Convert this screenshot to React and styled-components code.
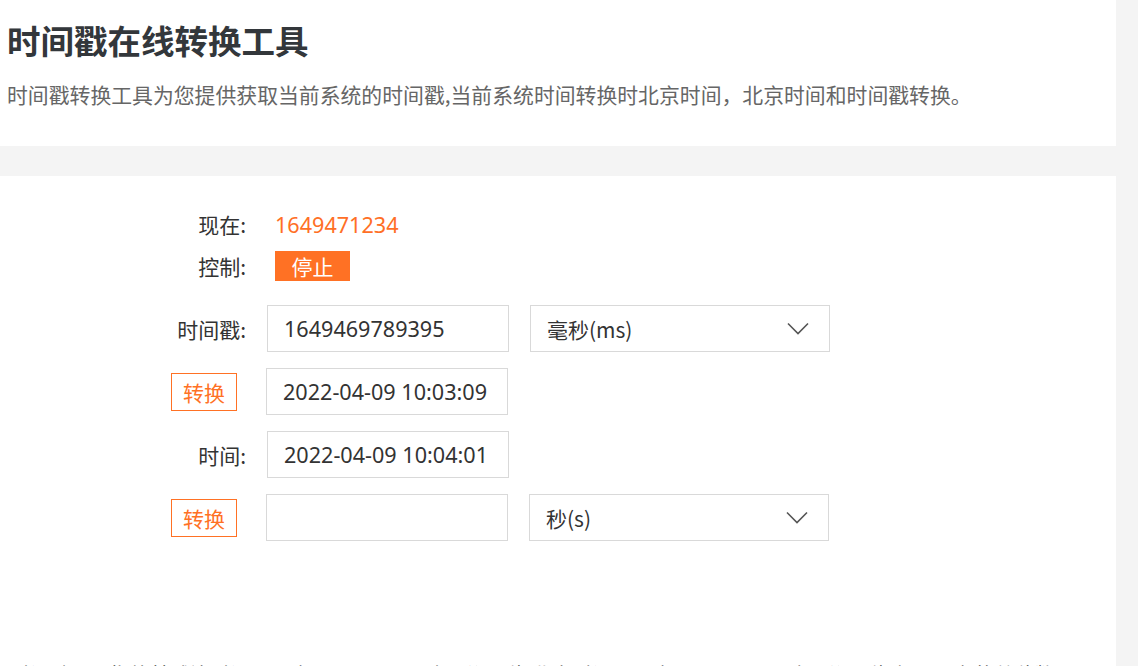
import React from "react";
import styled, { createGlobalStyle } from "styled-components";

const Global = createGlobalStyle`
  html, body { margin: 0; padding: 0; background: #f4f4f4; }
  body { font-family: "Noto Sans CJK SC", "Noto Sans", sans-serif; color: #333; overflow: hidden; }
  * { box-sizing: border-box; }
`;

const Page = styled.div`
  width: 1116px;
  display: flex;
  flex-direction: column;
  gap: 30px;
`;

const Header = styled.header`
  background: #fff;
  padding: 18px 7px 37px;
`;

const Title = styled.h1`
  margin: 0;
  font-size: 33.5px;
  line-height: 44px;
  font-weight: 700;
  color: #33373b;
`;

const Subtitle = styled.p`
  margin: 17px 0 0;
  font-size: 20.85px;
  line-height: 30px;
  color: #666;
`;

const Panel = styled.section`
  background: #fff;
  padding-top: 27px;
  height: 520px;
  display: flex;
  flex-direction: column;
`;

const InfoRow = styled.div`
  display: flex;
  align-items: center;
  height: 42px;
`;

const Label = styled.div`
  width: 246px;
  flex: none;
  text-align: right;
  font-size: 21px;
  color: #333;
`;

const Value = styled.div`
  margin-left: 29px;
  color: #ff6f26;
  font-family: "Noto Sans", "Noto Sans CJK SC", sans-serif;
  font-size: 21.6px;
`;

const StopButton = styled.button`
  margin-left: 29px;
  width: 75px;
  height: 30px;
  border: none;
  background: #ff7124;
  color: #fff;
  font-family: "Noto Sans CJK SC", sans-serif;
  font-size: 21px;
  padding: 0;
  line-height: 30px;
`;

const FormRows = styled.div`
  margin-top: 18px;
  display: flex;
  flex-direction: column;
  gap: 16px;
`;

const FormRow = styled.div`
  display: flex;
  align-items: center;
  height: 47px;
`;

const ButtonCell = styled.div`
  width: 246px;
  flex: none;
  display: flex;
  justify-content: flex-end;
  padding-right: 9px;
`;

const ConvertButton = styled.button`
  width: 66px;
  height: 38px;
  border: 1px solid #ff7124;
  background: #fff;
  color: #ff7124;
  font-family: "Noto Sans CJK SC", sans-serif;
  font-size: 21px;
  padding: 0;
`;

const Input = styled.div`
  margin-left: ${(p) => p.$offset}px;
  width: 242px;
  height: 47px;
  border: 1px solid #d9d9d9;
  padding-left: 16px;
  display: flex;
  align-items: center;
  font-family: "Noto Sans", "Noto Sans CJK SC", sans-serif;
  font-size: 21.6px;
  color: #333;
`;

const Select = styled.div`
  margin-left: 21px;
  width: 300px;
  height: 47px;
  border: 1px solid #d9d9d9;
  padding: 0 20px 0 16px;
  display: flex;
  align-items: center;
  justify-content: space-between;
  font-family: "Noto Sans CJK SC", sans-serif;
  font-size: 21px;
  color: #333;
`;

const Chevron = () => (
  <svg width="22" height="13" viewBox="0 0 22 13">
    <path d="M1 1.5 L11 11.5 L21 1.5" fill="none" stroke="#555" strokeWidth="1.6" />
  </svg>
);

const Article = styled.p`
  margin: auto 0 0;
  padding-left: 10px;
  font-size: 20px;
  line-height: 30px;
  color: #333;
  white-space: nowrap;
  transform: translateY(-6px);
`;

export default function App() {
  return (
    <>
      <Global />
      <Page>
        <Header>
          <Title>时间戳在线转换工具</Title>
          <Subtitle>
            时间戳转换工具为您提供获取当前系统的时间戳,当前系统时间转换时北京时间，北京时间和时间戳转换。
          </Subtitle>
        </Header>
        <Panel>
          <InfoRow>
            <Label>现在:</Label>
            <Value>1649471234</Value>
          </InfoRow>
          <InfoRow>
            <Label>控制:</Label>
            <StopButton>停止</StopButton>
          </InfoRow>
          <FormRows>
            <FormRow>
              <Label>时间戳:</Label>
              <Input $offset={21}>1649469789395</Input>
              <Select>
                <span>毫秒(ms)</span>
                <Chevron />
              </Select>
            </FormRow>
            <FormRow>
              <ButtonCell>
                <ConvertButton>转换</ConvertButton>
              </ButtonCell>
              <Input $offset={20}>2022-04-09 10:03:09</Input>
            </FormRow>
            <FormRow>
              <Label>时间:</Label>
              <Input $offset={21}>2022-04-09 10:04:01</Input>
            </FormRow>
            <FormRow>
              <ButtonCell>
                <ConvertButton>转换</ConvertButton>
              </ButtonCell>
              <Input $offset={20}></Input>
              <Select>
                <span>秒(s)</span>
                <Chevron />
              </Select>
            </FormRow>
          </FormRows>
          <Article>
            时间戳，是指格林威治时间1970年01月01日00时00分00秒(北京时间1970年01月01日08时00分00秒)起至现在的总秒数。
          </Article>
        </Panel>
      </Page>
    </>
  );
}
